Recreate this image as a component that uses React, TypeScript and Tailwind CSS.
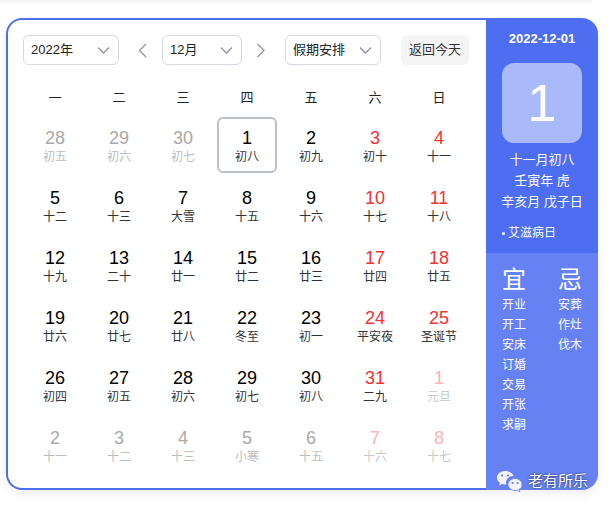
import React from "react";

const FONT = '"Liberation Sans", "Noto Sans CJK SC", sans-serif';

type D = [string, string, string?];
const rows: D[][] = [
  [["28","初五","o"],["29","初六","o"],["30","初七","o"],["1","初八","t"],["2","初九"],["3","初十","r"],["4","十一","r"]],
  [["5","十二"],["6","十三"],["7","大雪"],["8","十五"],["9","十六"],["10","十七","r"],["11","十八","r"]],
  [["12","十九"],["13","二十"],["14","廿一"],["15","廿二"],["16","廿三"],["17","廿四","r"],["18","廿五","r"]],
  [["19","廿六"],["20","廿七"],["21","廿八"],["22","冬至"],["23","初一"],["24","平安夜","r"],["25","圣诞节","r"]],
  [["26","初四"],["27","初五"],["28","初六"],["29","初七"],["30","初八"],["31","二九","r"],["1","元旦","p"]],
  [["2","十一","o"],["3","十二","o"],["4","十三","o"],["5","小寒","o"],["6","十五","o"],["7","十六","p"],["8","十七","p"]],
];

function Chevron({ dir }: { dir: "down" | "left" | "right" }) {
  const d = dir === "down" ? "M1 1.5 L6.5 7 L12 1.5" : dir === "left" ? "M8 1 L1.5 7.5 L8 14" : "M1.5 1 L8 7.5 L1.5 14";
  const w = dir === "down" ? 13 : 10;
  const h = dir === "down" ? 8 : 15;
  return (
    <svg width={w} height={h} viewBox={`0 0 ${w} ${h}`} fill="none" stroke="#8e92a4" strokeWidth="1.3">
      <path d={d} />
    </svg>
  );
}

function Select({ label, w }: { label: string; w: string }) {
  return (
    <div className={`${w} h-[30px] flex items-center justify-between pl-[7px] pr-[8px] border border-[#d7d9e0] rounded-md text-[13px] text-[#222222]`}>
      <span>{label}</span>
      <Chevron dir="down" />
    </div>
  );
}

function Cell({ d }: { d: D }) {
  const [n, l, k] = d;
  const num = k === "o" ? "text-[#a9a9a9]" : k === "r" ? "text-[#f73131]" : k === "p" ? "text-[#fbb4b4]" : "text-black";
  const lun = k === "o" ? "text-[#bdbdbd]" : k === "p" ? "text-[#c9c9c9]" : "text-[#333333]";
  return (
    <div className="flex items-start justify-center h-[60px]">
      <div className={`w-[60px] h-[56px] flex flex-col items-center pt-[9px] rounded-md border-2 ${k === "t" ? "border-[#bcbfca]" : "border-transparent"}`}>
        <span className={`text-[18px] leading-[20px] ${num}`}>{n}</span>
        <span className={`text-[12px] leading-[18px] ${lun}`}>{l}</span>
      </div>
    </div>
  );
}

function WeChat() {
  return (
    <svg width="27" height="23" viewBox="0 0 27 23" fill="#f2f4fa">
      <path d="M9 1C4.500 1 1 4 1 7.700c0 2.100 1.100 3.900 2.900 5.100L3.200 15.500l2.900-1.600c1 .3 2 .5 3 .5h1.400c-.3-.7-.5-1.300-.5-2 0-3.700 3.300-6.300 7.300-6.300h.4C16.800 3.200 13 1 9 1z" />
      <path d="M26 14.500c0-3.300-3-6-7-6s-7 2.700-7 6 3 6 7 6c.9 0 1.700-.1 2.400-.4l2.400 1.800-.6-2.700C25 18.700 26 16.700 26 14.500z" stroke="#5f7ff0" strokeWidth="0.8" />
      <circle cx="16.500" cy="13" r="1.100" fill="#5f7ff0" />
      <circle cx="21.500" cy="13" r="1.100" fill="#5f7ff0" />
      <circle cx="6" cy="5.500" r="1.100" fill="#5f7ff0" />
      <circle cx="12" cy="5.500" r="1.100" fill="#5f7ff0" />
    </svg>
  );
}

export default function App() {
  return (
    <div className="w-[608px] h-[509px] bg-white" style={{ fontFamily: FONT }}>
      <div className="w-[592px] h-[5px] bg-gradient-to-b from-[#f4f4f4] to-white" />
      <div className="relative ml-[6px] mt-[13px] w-[592px] h-[472px] flex rounded-[16px] bg-white shadow-[0_4px_10px_rgba(0,0,0,0.07)]">
        <div className="w-[480px] shrink-0 pt-[15px] border-2 border-r-0 border-[#4e6ef2] rounded-l-[16px]">
          <div className="flex items-center pl-[15px]">
            <Select label="2022年" w="w-[96px]" />
            <div className="w-[43px] pl-[5px] flex justify-center"><Chevron dir="left" /></div>
            <Select label="12月" w="w-[80px]" />
            <div className="w-[43px] pr-[5px] flex justify-center"><Chevron dir="right" /></div>
            <Select label="假期安排" w="w-[96px]" />
            <div className="ml-[20px] w-[68px] h-[30px] flex items-center justify-center bg-[#f5f5f6] rounded-md text-[13px] text-[#333333]">返回今天</div>
          </div>
          <div className="grid grid-cols-7 w-[448px] ml-[15px] mt-[18px] h-[30px] items-center text-center text-[13px] text-[#222222]">
            {["一","二","三","四","五","六","日"].map((w) => <span key={w}>{w}</span>)}
          </div>
          <div className="grid grid-cols-7 w-[448px] ml-[15px] mt-[4px]">
            {rows.flat().map((d, i) => <Cell key={i} d={d} />)}
          </div>
        </div>
        <div className="w-[112px] flex flex-col text-white text-center rounded-r-[16px] overflow-hidden">
          <div className="h-[235px] bg-[#4e6ef2] flex flex-col items-center pt-[12px]">
            <div className="text-[13px] leading-[18px] font-bold">2022-12-01</div>
            <div className="mt-[15px] w-[80px] h-[80px] rounded-[12px] bg-[#a9b9fa] flex items-center justify-center text-[52px] font-thin">1</div>
            <div className="mt-[6px] text-[13px] leading-[21px]">
              <div>十一月初八</div>
              <div>壬寅年 虎</div>
              <div>辛亥月 戊子日</div>
            </div>
            <div className="self-start pl-[16px] mt-[12px] text-[12px] leading-[18px] flex items-center gap-[3px]">
              <span className="w-[3px] h-[3px] rounded-full bg-white" />
              <span>艾滋病日</span>
            </div>
          </div>
          <div className="flex-1 bg-[#6581f3] flex justify-between pl-[16px] pr-[16px] pt-[12px] text-[12px]">
            <div className="w-[24px] flex flex-col items-center">
              <div className="text-[24px] leading-[30px]">宜</div>
              {["开业","开工","安床","订婚","交易","开张","求嗣"].map((t) => <div key={t} className="leading-[20px]">{t}</div>)}
            </div>
            <div className="w-[24px] flex flex-col items-center">
              <div className="text-[24px] leading-[30px]">忌</div>
              {["安葬","作灶","伐木"].map((t) => <div key={t} className="leading-[20px]">{t}</div>)}
            </div>
          </div>
        </div>
        <div className="absolute right-[10px] bottom-[-3px] flex items-center gap-[5px] text-[15px] text-white [text-shadow:0_0_2px_rgba(0,0,0,0.8)]">
          <WeChat />
          <span>老有所乐</span>
        </div>
      </div>
    </div>
  );
}
